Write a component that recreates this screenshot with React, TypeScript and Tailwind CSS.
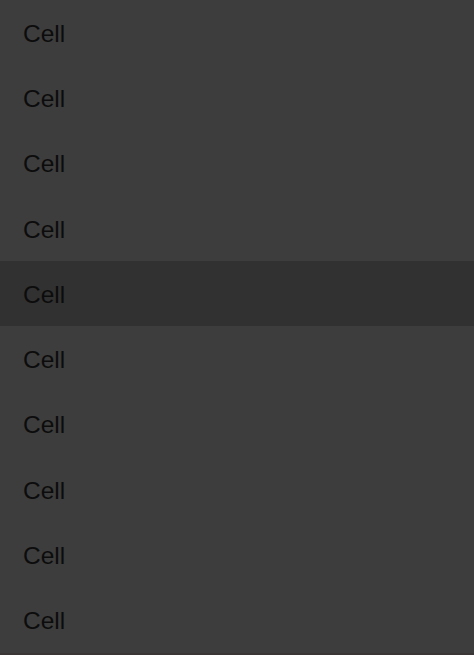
const rows = Array.from({ length: 10 }, (_, i) => ({ id: i, label: 'Cell', selected: i === 4 }));

export default function App() {
  return (
    <div className="h-[655px] w-[474px] overflow-hidden bg-[#3a3636]" style={{ fontFamily: '"Liberation Sans", Arial, sans-serif' }}>
      <ul className="bg-[#3d3d3d]">
        {rows.map((row) => (
          <li
            key={row.id}
            className={`flex h-[65.25px] items-center pl-[23px] pt-[3px] text-[24.5px] text-[#0c0c0c] ${row.selected ? 'bg-[#313131]' : 'bg-[#3d3d3d]'}`}
          >
            {row.label}
          </li>
        ))}
      </ul>
    </div>
  );
}
